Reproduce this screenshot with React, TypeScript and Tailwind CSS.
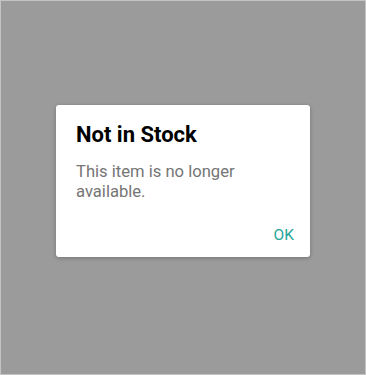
export default function App() {
  return (
    <div className="w-[366px] h-[375px] bg-[#9b9b9b] border border-[#c4c4c4] flex items-center justify-center" style={{ fontFamily: 'Roboto, "Liberation Sans", sans-serif' }}>
      <div className="w-[254px] h-[152px] bg-white rounded-[3px] shadow-[0_1px_4px_rgba(0,0,0,0.25)] flex flex-col pl-[20px] pr-[14px] pt-[16px] -mt-[13px]">
        <div className="text-[22px] font-bold text-black leading-[28px]">Not in Stock</div>
        <div className="mt-[13px] text-[16.6px] text-[#757575] leading-[20px] pr-[10px]">This item is no longer available.</div>
        <div className="mt-auto mb-[12px] flex justify-end">
          <span className="text-[15.5px] text-[#26a69a] leading-[20px] px-[2px]">OK</span>
        </div>
      </div>
    </div>
  );
}
